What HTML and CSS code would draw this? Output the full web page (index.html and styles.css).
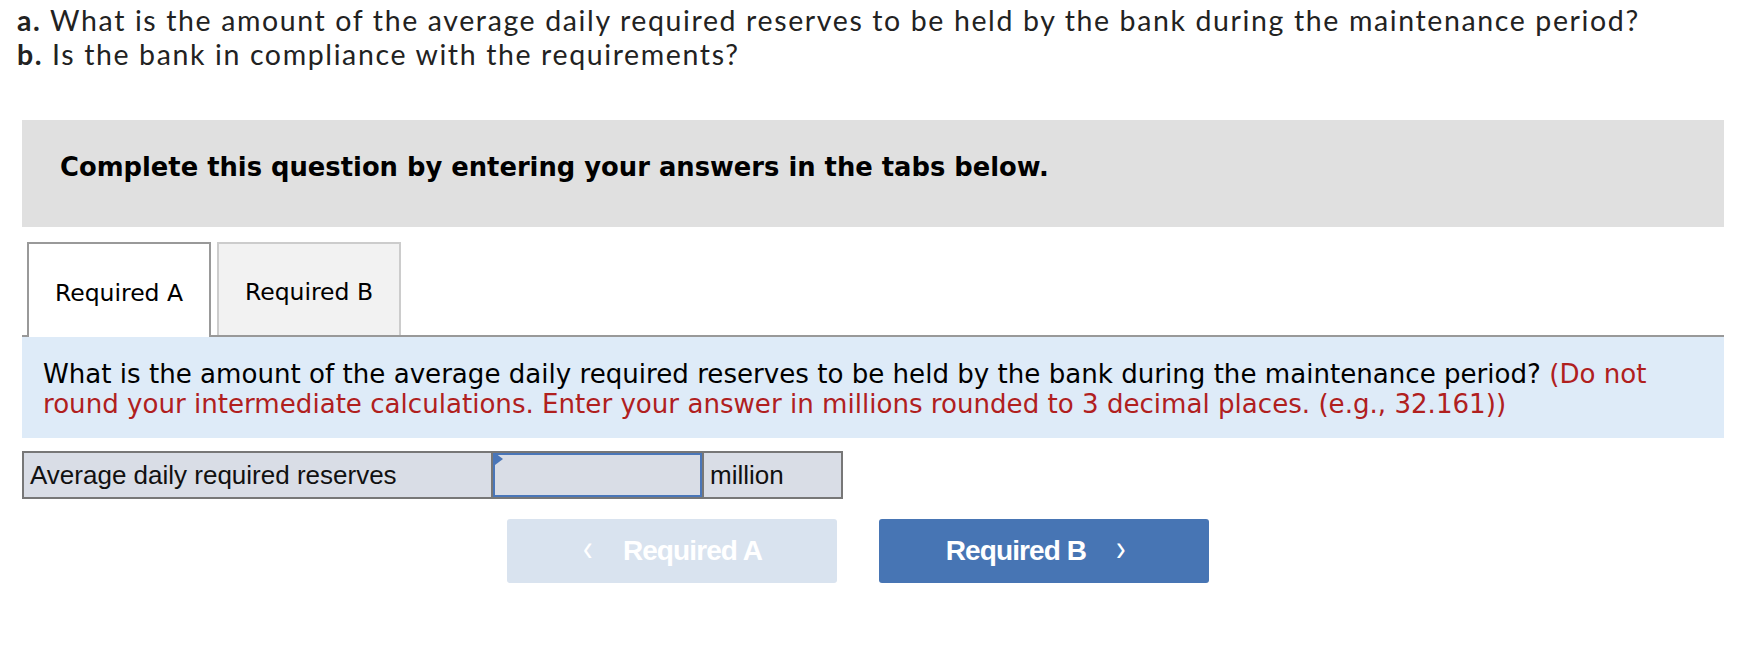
FILE: index.html
```html
<!DOCTYPE html>
<html>
<head>
<meta charset="utf-8">
<link rel="stylesheet" href="styles.css">
</head>
<body>
<div class="question">
  <p><b>a.</b> What is the amount of the average daily required reserves to be held by the bank during the maintenance period?</p>
  <p><b>b.</b> Is the bank in compliance with the requirements?</p>
</div>
<div class="main">
  <div class="instructions">Complete this question by entering your answers in the tabs below.</div>
  <div class="tabs">
    <div class="tab active">Required A</div>
    <div class="tab">Required B</div>
  </div>
  <div class="prompt">What is the amount of the average daily required reserves to be held by the bank during the maintenance period? <span class="hint">(Do not round your intermediate calculations. Enter your answer in millions rounded to 3 decimal places. (e.g., 32.161))</span></div>
  <div class="answer-row">
    <div class="cell label">Average daily required reserves</div>
    <div class="cell input"><span class="flag"></span></div>
    <div class="cell unit">million</div>
  </div>
  <div class="nav">
    <div class="btn prev"><span class="chev">&lsaquo;</span>Required A</div>
    <div class="btn next">Required B<span class="chev">&rsaquo;</span></div>
  </div>
</div>
</body>
</html>
```

FILE: styles.css
```css
html, body {
  margin: 0;
  padding: 0;
  background: #fff;
}
.question {
  padding: 3px 0 0 17px;
  font-family: Lato, "Open Sans", sans-serif;
  font-size: 28.5px;
  line-height: 34px;
  letter-spacing: 1.62px;
  color: #222;
}
.question p {
  margin: 0;
}
.question b {
  font-weight: 700;
}
.main {
  margin: 49px 0 0 22px;
  width: 1702px;
}
.instructions {
  height: 107px;
  box-sizing: border-box;
  padding: 0 0 14px 38px;
  background: #e0e0e0;
  display: flex;
  align-items: center;
  font-family: "DejaVu Sans", Verdana, sans-serif;
  font-weight: bold;
  font-size: 25.8px;
  color: #000;
}
.tabs {
  display: flex;
  gap: 6px;
  margin-top: 15px;
  padding-left: 5px;
  border-bottom: 2px solid #999;
  height: 93px;
}
.tab {
  width: 184px;
  height: 93px;
  display: flex;
  align-items: center;
  justify-content: center;
  padding-top: 4px;
  box-sizing: border-box;
  font-family: "DejaVu Sans", Verdana, sans-serif;
  font-size: 23.5px;
  color: #000;
  background: #f2f2f2;
  border: 2px solid #ccc;
  border-bottom: none;
}
.tab.active {
  background: #fff;
  border-color: #999;
  height: 95px;
  margin-bottom: -2px;
  position: relative;
}
.prompt {
  background: #deebf8;
  padding: 22px 21px 19px;
  font-family: "DejaVu Sans", Verdana, sans-serif;
  font-size: 26.1px;
  line-height: 30px;
  color: #000;
}
.hint {
  color: #b0201e;
}
.answer-row {
  margin-top: 13px;
  display: flex;
  width: 821px;
  height: 48px;
  box-sizing: border-box;
  border: 2px solid #777;
  background: #d9dde6;
  font-family: "Liberation Sans", Arial, sans-serif;
  font-size: 26px;
  color: #111;
}
.cell {
  display: flex;
  align-items: center;
}
.label {
  width: 469px;
  padding-left: 6px;
  box-sizing: border-box;
  border-right: 2px solid #777;
}
.input {
  width: 209px;
  box-sizing: border-box;
  border: 2px solid #4a76b8;
  position: relative;
}
.flag {
  position: absolute;
  left: 0;
  top: -2px;
  width: 0;
  height: 0;
  border-top: 6px solid transparent;
  border-bottom: 6px solid transparent;
  border-left: 8px solid #4a76b8;
}
.unit {
  flex: 1;
  padding-left: 6px;
  border-left: 2px solid #777;
}
.nav {
  display: flex;
  gap: 42px;
  margin: 20px 0 0 485px;
}
.btn {
  width: 330px;
  height: 64px;
  box-sizing: border-box;
  border-radius: 3px;
  display: flex;
  align-items: center;
  justify-content: center;
  font-family: "Liberation Sans", Arial, sans-serif;
  font-weight: bold;
  font-size: 28px;
  color: #fff;
  letter-spacing: -0.9px;
}
.btn.prev {
  background: #d9e3ef;
}
.btn.next {
  background: #4775b4;
  padding-right: 16px;
}
.chev {
  font-weight: normal;
  font-size: 36px;
  line-height: 1;
  margin: 0 30px;
  position: relative;
  top: -2px;
  transform: scaleX(0.8);
}
.btn.prev .chev {
  margin-left: 0;
}
.btn.next .chev {
  margin-right: 0;
  margin-left: 29px;
}
```
